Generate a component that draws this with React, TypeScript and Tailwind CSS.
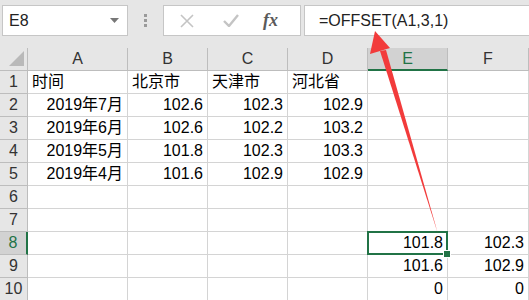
import React from "react";

const cols = ["A", "B", "C", "D", "E", "F"];
const widths = ["w-[100px]", "w-[80px]", "w-[80px]", "w-[80px]", "w-[80px]", "w-[81px]"];

type Cell = { v: string; left?: boolean };

const rows: Cell[][] = [
  [{ v: "时间", left: true }, { v: "北京市", left: true }, { v: "天津市", left: true }, { v: "河北省", left: true }, { v: "" }, { v: "" }],
  [{ v: "2019年7月" }, { v: "102.6" }, { v: "102.3" }, { v: "102.9" }, { v: "" }, { v: "" }],
  [{ v: "2019年6月" }, { v: "102.6" }, { v: "102.2" }, { v: "103.2" }, { v: "" }, { v: "" }],
  [{ v: "2019年5月" }, { v: "101.8" }, { v: "102.3" }, { v: "103.3" }, { v: "" }, { v: "" }],
  [{ v: "2019年4月" }, { v: "101.6" }, { v: "102.9" }, { v: "102.9" }, { v: "" }, { v: "" }],
  [{ v: "" }, { v: "" }, { v: "" }, { v: "" }, { v: "" }, { v: "" }],
  [{ v: "" }, { v: "" }, { v: "" }, { v: "" }, { v: "" }, { v: "" }],
  [{ v: "" }, { v: "" }, { v: "" }, { v: "" }, { v: "101.8" }, { v: "102.3" }],
  [{ v: "" }, { v: "" }, { v: "" }, { v: "" }, { v: "101.6" }, { v: "102.9" }],
  [{ v: "" }, { v: "" }, { v: "" }, { v: "" }, { v: "0" }, { v: "0" }],
];

function Toolbar() {
  return (
    <div className="flex h-[48px] items-start bg-[#e6e6e6] pt-[5px]">
      <div className="ml-[2px] flex h-[31px] w-[126px] items-center justify-between border border-[#c6c6c6] bg-white pl-[6px] pr-[8px] text-[16px] text-[#222]">
        <span>E8</span>
        <svg width="9" height="5" viewBox="0 0 9 5">
          <path d="M0 0h9L4.5 5z" fill="#777" />
        </svg>
      </div>
      <div className="ml-[16px] mt-[9px] flex flex-col gap-[2px]">
        <span className="size-[3px] bg-[#9a9a9a]" />
        <span className="size-[3px] bg-[#9a9a9a]" />
        <span className="size-[3px] bg-[#9a9a9a]" />
      </div>
      <div className="ml-[16px] flex h-[31px] w-[138px] items-center border border-[#c6c6c6] bg-white">
        <svg className="ml-[16px]" width="14" height="14" viewBox="0 0 14 14">
          <path d="M1 1l12 12M13 1L1 13" stroke="#c4c4c4" strokeWidth="1.6" />
        </svg>
        <svg className="ml-[29px]" width="16" height="13" viewBox="0 0 16 13">
          <path d="M1 7l5 5L15 1" stroke="#c4c4c4" strokeWidth="2.4" fill="none" />
        </svg>
        <span className="ml-[24px] text-[18px] font-bold italic text-[#5a5a5a] [font-family:'Liberation_Serif',serif]">
          fx
        </span>
      </div>
      <div className="ml-[3px] flex h-[31px] flex-1 items-center border-y border-l border-[#c6c6c6] bg-white pl-[14px] text-[16px] text-[#222]">
        =OFFSET(A1,3,1)
      </div>
    </div>
  );
}

function Arrow() {
  return (
    <svg className="pointer-events-none absolute left-0 top-0 z-20" width="529" height="300" viewBox="0 0 529 300">
      <path d="M438 234L386 50L380 51Z" fill="#f23b3b" />
      <path d="M375 31L370 54L390 48Z" fill="#f23b3b" />
    </svg>
  );
}

export default function App() {
  return (
    <div className="relative h-[300px] w-[529px] overflow-hidden bg-white text-[16px] text-black [font-family:'Liberation_Sans','Noto_Sans_CJK_SC',sans-serif]">
      <Toolbar />
      <div className="flex h-[23px] bg-[#e6e6e6] text-[#333]">
        <div className="relative w-[28px] border-r border-b border-[#bdbdbd]">
          <svg className="absolute bottom-[4px] right-[3px]" width="15" height="15" viewBox="0 0 15 15">
            <path d="M15 0V15H0Z" fill="#b9b9b9" />
          </svg>
        </div>
        {cols.map((c, i) => (
          <div
            key={c}
            className={`${widths[i]} flex items-center justify-center leading-none ${
              c === "E"
                ? "border-b-2 border-r border-b-[#217346] border-r-[#bdbdbd] bg-[#d2d2d2] text-[#217346]"
                : "border-b border-r border-[#bdbdbd]"
            }`}
          >
            {c}
          </div>
        ))}
      </div>
      {rows.map((row, r) => (
        <div key={r} className="flex h-[23px]">
          <div
            className={`flex w-[28px] items-center justify-center border-b border-[#bdbdbd] text-[#333] ${
              r === 7 ? "border-r-2 border-r-[#217346] bg-[#d2d2d2] text-[#217346]" : "border-r bg-[#e6e6e6]"
            }`}
          >
            {r + 1}
          </div>
          {row.map((cell, i) => (
            <div
              key={i}
              className={`${widths[i]} relative flex items-center whitespace-nowrap border-b border-r border-[#d4d4d4] px-[4px] ${
                cell.left ? "justify-start" : "justify-end"
              }`}
            >
              {cell.v}
              {r === 7 && i === 4 && (
                <>
                  <div className="absolute -left-px -top-px z-10 h-[24px] w-[81px] border-2 border-[#217346]" />
                  <div className="absolute -bottom-[4px] -right-[4px] z-10 size-[8px] border border-white bg-[#217346]" />
                </>
              )}
            </div>
          ))}
        </div>
      ))}
      <Arrow />
    </div>
  );
}
